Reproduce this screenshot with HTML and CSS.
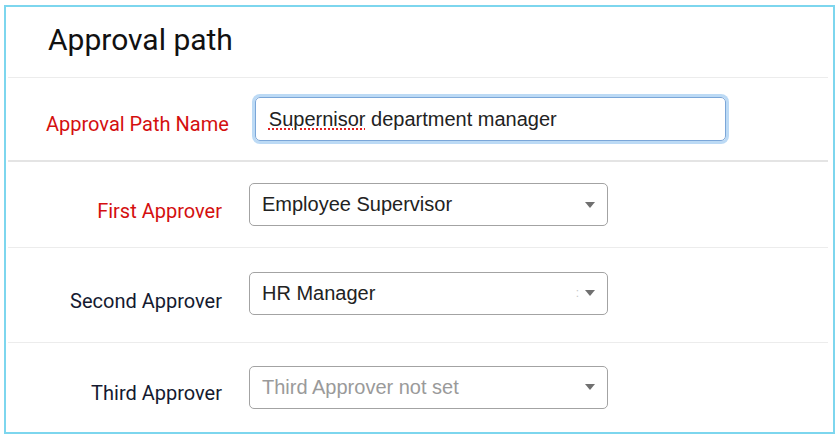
FILE: index.html
```html
<!DOCTYPE html>
<html lang="en">
<head>
  <meta charset="UTF-8" />
  <title>Approval path</title>
  <link rel="stylesheet" href="styles.css">
</head>
<body>
  <div class="panel">
    <div class="panel-head">
      <h1>Approval path</h1>
    </div>

    <div class="row row-name">
      <label class="label required">Approval Path Name</label>
      <div class="text-input focused">
        <span class="input-text"><span class="misspelled">Supernisor</span> department manager</span>
      </div>
    </div>

    <div class="row row-first">
      <label class="label required">First Approver</label>
      <div class="select">
        <span class="value">Employee Supervisor</span>
        <span class="arrow"></span>
      </div>
    </div>

    <div class="row row-second">
      <label class="label">Second Approver</label>
      <div class="select">
        <span class="value">HR Manager</span>
        <span class="dots">:</span>
        <span class="arrow"></span>
      </div>
    </div>

    <div class="row row-last">
      <label class="label">Third Approver</label>
      <div class="select">
        <span class="value placeholder">Third Approver not set</span>
        <span class="arrow"></span>
      </div>
    </div>
  </div>
</body>
</html>
```

FILE: styles.css
```css
body {
  margin: 0;
  padding: 5px 5px 6px 4px;
  background: #fff;
  font-family: Roboto, "Liberation Sans", sans-serif;
}

.panel {
  border: 2px solid #7dd6ee;
  height: 429px;
  box-sizing: border-box;
  padding: 0 5px 0 2px;
}

.panel-head {
  height: 70px;
  border-bottom: 1px solid #ececec;
  padding-left: 40px;
  display: flex;
  align-items: center;
}

.panel-head h1 {
  margin: 0;
  font-size: 30px;
  font-weight: 400;
  color: #111;
  padding-bottom: 6px;
}

.row {
  display: flex;
  align-items: center;
  border-bottom: 1px solid #ececec;
}

.row-name {
  height: 82px;
  border-bottom: 2px solid #e4e4e4;
}

.row-first {
  height: 85px;
}

.row-second {
  height: 94px;
}

.row-last {
  border-bottom: none;
  height: 88px;
}

.label {
  width: 214px;
  text-align: right;
  font-size: 20px;
  color: #151a30;
  padding-top: 12px;
  flex-shrink: 0;
}

.label.required {
  color: #d40f0f;
}

.row-name .label {
  width: auto;
  text-align: left;
  padding: 10px 0 0 38px;
}

.text-input {
  margin-left: 26px;
  width: 471px;
  height: 44px;
  box-sizing: border-box;
  border: 1px solid #7ba6d8;
  border-radius: 5px;
  box-shadow: 0 0 0 3px #bcdaf5;
  padding: 0 13px;
  display: flex;
  align-items: center;
  font-family: "Liberation Sans", Arial, sans-serif;
  font-size: 20px;
  color: #222;
}

.misspelled {
  text-decoration: underline dotted #e02020;
  text-underline-offset: 3px;
}

.select {
  margin-left: 27px;
  width: 359px;
  height: 43px;
  box-sizing: border-box;
  border: 1px solid #a3a3a3;
  border-radius: 5px;
  padding: 0 12px;
  display: flex;
  align-items: center;
  font-family: "Liberation Sans", Arial, sans-serif;
  font-size: 20px;
  color: #222;
}

.row-second .select {
  margin-top: -4px;
}

.value {
  flex-grow: 1;
}

.placeholder {
  color: #9a9a9a;
}

.dots {
  color: #c8c8c8;
  font-size: 12px;
  margin-right: 6px;
}

.arrow {
  width: 0;
  height: 0;
  border-left: 5px solid transparent;
  border-right: 5px solid transparent;
  border-top: 6px solid #707070;
}
```
